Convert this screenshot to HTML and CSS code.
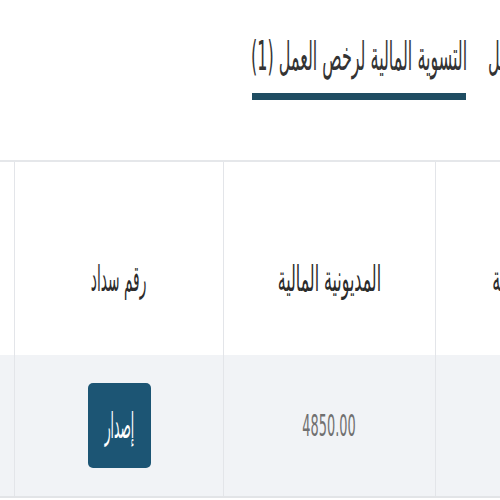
FILE: index.html
```html
<!DOCTYPE html>
<html lang="ar">
<head>
<meta charset="utf-8">
<link rel="stylesheet" href="styles.css">
</head>
<body>
<div class="viewport">
  <nav class="tabs">
    <div class="tab tab-first"><span class="tab-text">رخص العمل</span></div>
    <div class="tab tab-active"><span class="tab-text">التسوية المالية لرخص العمل (1)</span></div>
  </nav>
  <table class="grid">
    <thead>
      <tr>
        <th class="col-a"><div class="cell"><span class="head-text wide">حالة المديونية</span></div></th>
        <th class="col-b"><div class="cell"><span class="head-text wide">المديونية المالية</span></div></th>
        <th class="col-c"><div class="cell"><span class="head-text narrow">رقم سداد</span></div></th>
        <th class="col-d"></th>
      </tr>
    </thead>
    <tbody>
      <tr>
        <td class="col-a"><div class="cell"><span class="num-text">2023/05/14</span></div></td>
        <td class="col-b"><div class="cell"><span class="num-text">4850.00</span></div></td>
        <td class="col-c"><div class="cell"><button class="issue-btn" type="button"><span class="btn-text">إصدار</span></button></div></td>
        <td class="col-d"></td>
      </tr>
    </tbody>
  </table>
</div>
</body>
</html>
```
FILE: styles.css
```css
html, body {
  margin: 0;
  padding: 0;
  background: #ffffff;
  overflow: hidden;
}
body {
  font-family: "DejaVu Sans", sans-serif;
  color: #333333;
}
.viewport {
  width: 500px;
  height: 500px;
  overflow: hidden;
  direction: ltr;
}
.tabs {
  direction: rtl;
  width: 900px;
  display: flex;
  gap: 22px;
  padding-top: 26px;
  height: 74px;
}
.tab {
  display: flex;
  flex-direction: column;
}
.tab-first {
  width: 412px;
  align-items: flex-end;
}
.tab-active {
  width: 214px;
  align-items: center;
}
.tab-text {
  display: block;
  height: 60px;
  line-height: 60px;
  font-size: 40px;
  color: #333333;
  white-space: nowrap;
  transform: scaleX(0.40);
}
.tab-first .tab-text {
  transform-origin: left center;
}
.tab-active .tab-text {
  transform-origin: center center;
}
.tab-active::after {
  content: "";
  display: block;
  align-self: stretch;
  height: 7px;
  margin-top: 7px;
  background: #1f4d62;
}
.grid {
  direction: rtl;
  width: 635px;
  margin-top: 60px;
  border-collapse: collapse;
  table-layout: fixed;
  border-top: 2px solid #e5e7ea;
  border-bottom: 2px solid #e2e4e7;
}
.col-a { width: 202px; }
.col-b { width: 211px; }
.col-c { width: 208px; }
.col-d { width: 14px; }
.grid th, .grid td {
  padding: 0;
  border-left: 1px solid #e3e5e9;
  overflow: visible;
  white-space: nowrap;
}
.grid th.col-d, .grid td.col-d {
  border-left: none;
}
.grid th {
  height: 193px;
  background: #ffffff;
  font-weight: normal;
  vertical-align: middle;
}
.grid td {
  height: 141px;
  background: #f1f3f6;
  vertical-align: middle;
}
.cell {
  display: flex;
  justify-content: center;
  align-items: center;
}
.grid th .cell {
  padding-top: 40px;
}
.head-text {
  display: block;
  font-size: 36px;
  color: #2b2b2b;
  white-space: nowrap;
}
.head-text.wide {
  transform: scaleX(0.44);
}
.head-text.narrow {
  transform: scaleX(0.383);
}
.num-text {
  display: block;
  font-size: 30px;
  color: #707070;
  white-space: nowrap;
  transform: scaleX(0.43);
}
.issue-btn {
  width: 63px;
  height: 85px;
  border: none;
  border-radius: 5px;
  background: #1c5574;
  color: #ffffff;
  padding: 0;
  font-family: "DejaVu Sans", sans-serif;
  display: flex;
  align-items: center;
  justify-content: center;
  overflow: visible;
}
.btn-text {
  display: block;
  font-size: 36px;
  white-space: nowrap;
  transform: scaleX(0.34);
}
```
